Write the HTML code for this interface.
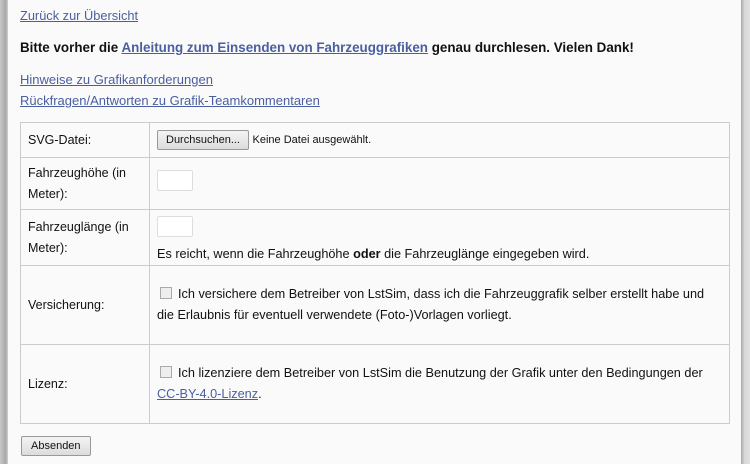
<!DOCTYPE html>
<html><head><meta charset="utf-8"><style>
body{margin:0;width:750px;height:464px;background:#fafafa;font-family:"Liberation Sans",sans-serif;font-size:12.5px;color:#111;position:relative;overflow:hidden}
.lb{position:absolute;left:0;top:0;width:8px;height:464px;background:linear-gradient(90deg,#c8c8c8,#a8a8a8 70%,#d0d0d0)}
.rb{position:absolute;left:741px;top:0;width:9px;height:464px;background:linear-gradient(90deg,#a8a8a8,#d8d8d8 40%,#e0e0e0)}
a{color:#4a5fa0;text-decoration:underline}
.t{position:absolute;left:20px;white-space:nowrap;font-size:13px}
table{position:absolute;left:20px;top:122px;width:710px;border-collapse:collapse;font-size:12.7px}
td{border:1px solid #ccc;padding:0 7px;vertical-align:middle;line-height:21px}
td.l{width:114px;font-size:12.5px}
td.n{white-space:nowrap}
.cb{display:inline-block;width:10px;height:10px;border:1px solid #aaa;background:#eee;vertical-align:-1px;margin-right:6px;margin-left:3px}
.btn{display:inline-block;border:1px solid #999;border-radius:2px;background:linear-gradient(#f4f4f4,#dcdcdc);font-size:11px;padding:2px 8px;line-height:14px}
.inp{display:inline-block;width:34px;height:19px;border:1px solid #ddd;background:#fff;border-radius:2px}
</style></head><body>
<div class="lb"></div><div class="rb"></div>
<div class="t" style="top:8px;font-size:12.8px"><a>Zurück zur Übersicht</a></div>
<div class="t" style="top:40px;font-weight:bold;font-size:13.4px">Bitte vorher die <a>Anleitung zum Einsenden von Fahrzeuggrafiken</a> genau durchlesen. Vielen Dank!</div>
<div class="t" style="top:72px"><a>Hinweise zu Grafikanforderungen</a></div>
<div class="t" style="top:93px"><a>Rückfragen/Antworten zu Grafik-Teamkommentaren</a></div>
<table>
<tr style="height:35px"><td class="l">SVG-Datei:</td><td><span class="btn">Durchsuchen...</span> <span style="font-size:11px">Keine Datei ausgewählt.</span></td></tr>
<tr style="height:52px"><td class="l">Fahrzeughöhe (in Meter):</td><td><span class="inp"></span></td></tr>
<tr style="height:55px"><td class="l">Fahrzeuglänge (in Meter):</td><td><span class="inp" style="margin-top:6px"></span><br>Es reicht, wenn die Fahrzeughöhe <b>oder</b> die Fahrzeuglänge eingegeben wird.</td></tr>
<tr style="height:79px"><td class="l">Versicherung:</td><td class="n"><span class="cb"></span>Ich versichere dem Betreiber von LstSim, dass ich die Fahrzeuggrafik selber erstellt habe und<br>die Erlaubnis für eventuell verwendete (Foto-)Vorlagen vorliegt.</td></tr>
<tr style="height:79px"><td class="l">Lizenz:</td><td class="n"><span class="cb"></span>Ich lizenziere dem Betreiber von LstSim die Benutzung der Grafik unter den Bedingungen der<br><a>CC-BY-4.0-Lizenz</a>.</td></tr>
</table>
<div class="t" style="top:436px;left:21px"><span class="btn" style="padding:2px 9px">Absenden</span></div>
</body></html>
